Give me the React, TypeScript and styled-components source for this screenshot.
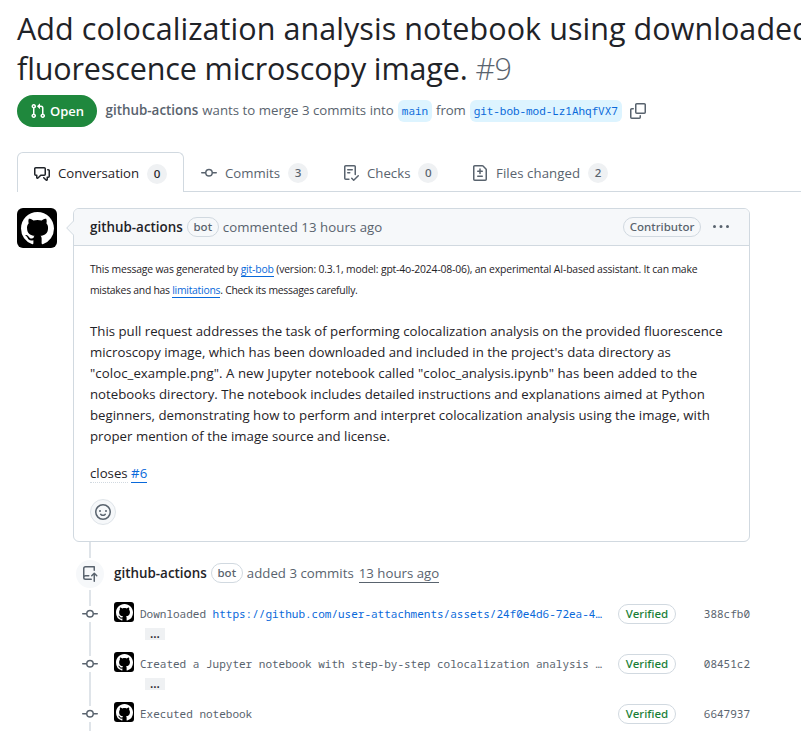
import React from "react";
import styled, { createGlobalStyle, css } from "styled-components";

const color = {
  text: "#1f2328",
  muted: "#59636e",
  border: "#d1d9e0",
  link: "#0969da",
  subtle: "#f6f8fa",
};

const sans = `"Open Sans", "Noto Sans", sans-serif`;
const labelSans = `"Noto Sans", "Open Sans", sans-serif`;
const mono = `"Noto Sans Mono", "DejaVu Sans Mono", monospace`;

const Global = createGlobalStyle`
  *, *::before, *::after { box-sizing: border-box; }
  html, body { margin: 0; background: #fff; overflow: hidden; }
  body { font: 400 13.22px/21px ${sans}; color: ${color.text}; }
  p, h1 { margin: 0; }
`;

const paths = {
  pullRequest:
    "M1.5 3.25a2.25 2.25 0 1 1 3 2.122v5.256a2.251 2.251 0 1 1-1.5 0V5.372A2.25 2.25 0 0 1 1.5 3.25Zm5.677-.177L9.573.677A.25.25 0 0 1 10 .854V2.5h1A2.5 2.5 0 0 1 13.5 5v5.628a2.251 2.251 0 1 1-1.5 0V5a1 1 0 0 0-1-1h-1v1.646a.25.25 0 0 1-.427.177L7.177 3.427a.25.25 0 0 1 0-.354ZM3.75 2.5a.75.75 0 1 0 0 1.5.75.75 0 0 0 0-1.5Zm0 9.5a.75.75 0 1 0 0 1.5.75.75 0 0 0 0-1.5Zm8.25.75a.75.75 0 1 0 1.5 0 .75.75 0 0 0-1.5 0Z",
  discussion:
    "M1.75 1h8.5c.966 0 1.75.784 1.75 1.75v5.5A1.75 1.75 0 0 1 10.25 10H7.061l-2.574 2.573A1.458 1.458 0 0 1 2 11.543V10h-.25A1.75 1.75 0 0 1 0 8.25v-5.5C0 1.784.784 1 1.75 1ZM1.5 2.75v5.5c0 .138.112.25.25.25h1a.75.75 0 0 1 .75.75v2.19l2.72-2.72a.749.749 0 0 1 .53-.22h3.5a.25.25 0 0 0 .25-.25v-5.5a.25.25 0 0 0-.25-.25h-8.5a.25.25 0 0 0-.25.25Zm13 2a.25.25 0 0 0-.25-.25h-.5a.75.75 0 0 1 0-1.5h.5c.966 0 1.75.784 1.75 1.75v5.5A1.75 1.75 0 0 1 14.25 12H14v1.543a1.458 1.458 0 0 1-2.487 1.03L9.22 12.28a.749.749 0 0 1 .326-1.275.749.749 0 0 1 .734.215l2.22 2.22v-2.19a.75.75 0 0 1 .75-.75h1a.25.25 0 0 0 .25-.25Z",
  commit:
    "M11.93 8.5a4.002 4.002 0 0 1-7.86 0H.75a.75.75 0 0 1 0-1.5h3.32a4.002 4.002 0 0 1 7.86 0h3.32a.75.75 0 0 1 0 1.5Zm-1.43-.75a2.5 2.5 0 1 0-5 0 2.5 2.5 0 0 0 5 0Z",
  checklist:
    "M2.5 1.75v11.5c0 .138.112.25.25.25h3.17a.75.75 0 0 1 0 1.5H2.75A1.75 1.75 0 0 1 1 13.25V1.75C1 .784 1.784 0 2.75 0h8.5C12.216 0 13 .784 13 1.75v7.736a.75.75 0 0 1-1.5 0V1.75a.25.25 0 0 0-.25-.25h-8.5a.25.25 0 0 0-.25.25Zm13.274 9.537v-.001l-4.557 4.45a.75.75 0 0 1-1.055-.008l-1.943-1.95a.75.75 0 0 1 1.062-1.058l1.419 1.425 4.026-3.932a.75.75 0 1 1 1.048 1.074ZM4.75 4h4.5a.75.75 0 0 1 0 1.5h-4.5a.75.75 0 0 1 0-1.5ZM4 7.75A.75.75 0 0 1 4.75 7h2a.75.75 0 0 1 0 1.5h-2A.75.75 0 0 1 4 7.75Z",
  fileDiff:
    "M1 1.75C1 .784 1.784 0 2.75 0h7.586c.464 0 .909.184 1.237.513l2.914 2.914c.329.328.513.773.513 1.237v9.586A1.75 1.75 0 0 1 13.25 16H2.75A1.75 1.75 0 0 1 1 14.25Zm1.75-.25a.25.25 0 0 0-.25.25v12.5c0 .138.112.25.25.25h10.5a.25.25 0 0 0 .25-.25V4.664a.25.25 0 0 0-.073-.177l-2.914-2.914a.25.25 0 0 0-.177-.073ZM8 3.25a.75.75 0 0 1 .75.75v1.5h1.5a.75.75 0 0 1 0 1.5h-1.5v1.5a.75.75 0 0 1-1.5 0V7h-1.5a.75.75 0 0 1 0-1.5h1.5V4A.75.75 0 0 1 8 3.25Zm-3 8a.75.75 0 0 1 .75-.75h4.5a.75.75 0 0 1 0 1.5h-4.5a.75.75 0 0 1-.75-.75Z",
  copy:
    "M0 6.75C0 5.784.784 5 1.75 5h1.5a.75.75 0 0 1 0 1.5h-1.5a.25.25 0 0 0-.25.25v7.5c0 .138.112.25.25.25h7.5a.25.25 0 0 0 .25-.25v-1.5a.75.75 0 0 1 1.5 0v1.5A1.75 1.75 0 0 1 9.25 16h-7.5A1.75 1.75 0 0 1 0 14.25ZM5 1.75C5 .784 5.784 0 6.75 0h7.5C15.216 0 16 .784 16 1.75v7.5A1.75 1.75 0 0 1 14.25 11h-7.5A1.75 1.75 0 0 1 5 9.25Zm1.75-.25a.25.25 0 0 0-.25.25v7.5c0 .138.112.25.25.25h7.5a.25.25 0 0 0 .25-.25v-7.5a.25.25 0 0 0-.25-.25Z",
  kebab:
    "M8 9a1.5 1.5 0 1 0 0-3 1.5 1.5 0 0 0 0 3ZM1.5 9a1.5 1.5 0 1 0 0-3 1.5 1.5 0 0 0 0 3Zm13 0a1.5 1.5 0 1 0 0-3 1.5 1.5 0 0 0 0 3Z",
  smiley:
    "M8 0a8 8 0 1 1 0 16A8 8 0 0 1 8 0ZM1.5 8a6.5 6.5 0 1 0 13 0 6.5 6.5 0 0 0-13 0Zm3.82 1.636a.75.75 0 0 1 1.038.175l.007.009c.103.118.22.222.35.31.264.178.683.37 1.285.37.602 0 1.02-.192 1.285-.371.13-.088.247-.192.35-.31l.007-.008a.75.75 0 0 1 1.222.87l-.04.06a2.8 2.8 0 0 1-.715.658c-.63.418-1.37.638-2.127.629-.946 0-1.652-.308-2.126-.63a3.331 3.331 0 0 1-.715-.657l-.024-.035a.75.75 0 0 1 .183-1.044ZM12 7a1 1 0 1 1-2 0 1 1 0 0 1 2 0ZM5 8a1 1 0 1 1 0-2 1 1 0 0 1 0 2Z",
  repoPush:
    "M1 2.5A2.5 2.5 0 0 1 3.5 0h8.75a.75.75 0 0 1 .75.75v3.5a.75.75 0 0 1-1.5 0V1.5h-8a1 1 0 0 0-1 1v6.708A2.493 2.493 0 0 1 3.5 9h3.25a.75.75 0 0 1 0 1.5H3.5a1 1 0 0 0 0 2h5.75a.75.75 0 0 1 0 1.5H3.5A2.5 2.5 0 0 1 1 11.5Zm13.23 7.79h-.001l-1.224-1.224v6.184a.75.75 0 0 1-1.5 0V9.066L10.28 10.29a.75.75 0 0 1-1.06-1.061l2.505-2.504a.75.75 0 0 1 1.06 0L15.29 9.23a.751.751 0 0 1-.018 1.042.751.751 0 0 1-1.042.018Z",
  github:
    "M8 0c4.42 0 8 3.58 8 8a8.013 8.013 0 0 1-5.45 7.59c-.4.08-.55-.17-.55-.38 0-.27.01-1.13.01-2.2 0-.75-.25-1.23-.54-1.48 1.78-.2 3.65-.88 3.65-3.95 0-.88-.31-1.59-.82-2.15.08-.2.36-1.02-.08-2.12 0 0-.67-.22-2.2.82-.64-.18-1.32-.27-2-.27-.68 0-1.36.09-2 .27-1.53-1.03-2.2-.82-2.2-.82-.44 1.1-.16 1.92-.08 2.12-.51.56-.82 1.28-.82 2.15 0 3.06 1.86 3.75 3.64 3.95-.23.2-.44.55-.51 1.07-.46.21-1.61.55-2.33-.66-.15-.24-.6-.83-1.23-.82-.67.01-.27.38.01.53.34.19.73.9.82 1.13.16.45.68 1.31 2.69.94 0 .67.01 1.3.01 1.49 0 .21-.15.45-.55.38A7.995 7.995 0 0 1 0 8c0-4.42 3.58-8 8-8Z",
};

const Svg = styled.svg`
  display: block;
  flex: none;
  fill: currentColor;
`;

const Icon = ({ name, size = 16 }: { name: keyof typeof paths; size?: number }) => (
  <Svg width={size} height={size} viewBox="0 0 16 16" aria-hidden="true">
    <path d={paths[name]} />
  </Svg>
);

const Page = styled.main`
  width: 801px;
  height: 731px;
  overflow: hidden;
`;

const Title = styled.h1`
  padding: 8px 0 0 17px;
  font-size: 30.5px;
  font-weight: 400;
  line-height: 40px;
  white-space: nowrap;
`;

const Line = styled.span<{ $spacing: number }>`
  display: block;
  letter-spacing: ${(p) => p.$spacing}px;
`;

const Number = styled.span`
  font-weight: 300;
  color: ${color.muted};
  letter-spacing: -0.6px;
`;

const MetaRow = styled.div`
  display: flex;
  align-items: center;
  height: 32px;
  margin-top: 7px;
  padding-left: 17px;
  color: ${color.muted};
  white-space: nowrap;
`;

const StateBadge = styled.span`
  display: flex;
  align-items: center;
  gap: 4px;
  width: 80px;
  height: 32px;
  margin-right: 8.5px;
  padding-left: 13px;
  border-radius: 16px;
  background: #1f883d;
  color: #fff;
  font-size: 13px;
  font-weight: 600;
`;

const Author = styled.span<{ $muted?: boolean }>`
  font-size: 13.4px;
  font-weight: 600;
  color: ${(p) => (p.$muted ? color.muted : color.text)};
`;

const MetaText = styled.span`
  display: flex;
  align-items: center;
  margin-top: -1px;
`;

const Phrase = styled.span<{ $spacing?: number }>`
  margin-left: 4px;
  letter-spacing: ${(p) => p.$spacing ?? 0}px;
`;

const Branch = styled.span`
  height: 22px;
  margin: 1px 0 0 4px;
  padding: 0 4px;
  border-radius: 6px;
  background: #ddf4ff;
  color: ${color.link};
  font: 11px/22px ${mono};
  letter-spacing: -0.05px;
`;

const CopyButton = styled.span`
  margin-left: 8px;
`;

const Tabs = styled.nav`
  display: flex;
  height: 40px;
  margin: 25px 0 0 17px;
  box-shadow: inset 0 -1px 0 ${color.border};
`;

const Tab = styled.div<{ $active?: boolean; $width: number }>`
  display: flex;
  align-items: center;
  width: ${(p) => p.$width}px;
  padding: 2px 0 0 ${(p) => (p.$active ? 16 : 17)}px;
  color: ${color.muted};
  white-space: nowrap;
  ${(p) =>
    p.$active &&
    css`
      border: 1px solid ${color.border};
      border-bottom: 0;
      border-radius: 6px 6px 0 0;
      background: #fff;
      color: ${color.text};
    `}
`;

const TabLabel = styled.span<{ $spacing?: number }>`
  margin: 0 8px;
  letter-spacing: ${(p) => p.$spacing ?? 0}px;
`;

const Counter = styled.span`
  display: grid;
  place-items: center;
  min-width: 20px;
  height: 20px;
  border-radius: 10px;
  background: #eff1f3;
  font: 500 11.6px/18px ${labelSans};
`;

const Thread = styled.section`
  display: flex;
  gap: 16px;
  margin-top: 16px;
  padding-left: 17px;
`;

const Avatar = styled.span<{ $size: number }>`
  display: grid;
  place-items: center;
  flex: none;
  width: ${(p) => p.$size}px;
  height: ${(p) => p.$size}px;
  border-radius: ${(p) => (p.$size > 30 ? 6 : 3)}px;
  background: #000;
  color: #fff;
`;

const Card = styled.article`
  position: relative;
  width: 677px;
  height: 334px;
  border: 1px solid ${color.border};
  border-radius: 6px;
`;

const Caret = styled.svg`
  position: absolute;
  top: 11px;
  left: -8px;
`;

const CardHeader = styled.header`
  display: flex;
  align-items: center;
  height: 37px;
  padding: 0 20px 0 16px;
  border-bottom: 1px solid ${color.border};
  border-radius: 5px 5px 0 0;
  background: ${color.subtle};
  color: ${color.muted};
  white-space: nowrap;
`;

const Label = styled.span<{ $width: number; $verified?: boolean }>`
  display: inline-flex;
  align-items: center;
  justify-content: center;
  flex: none;
  width: ${(p) => p.$width}px;
  height: 20px;
  border: 1px solid ${color.border};
  border-radius: 10px;
  color: ${(p) => (p.$verified ? "#1a7f37" : color.muted)};
  font: 500 11.5px/16px ${labelSans};
`;

const BotLabel = styled(Label)`
  margin-left: 4px;
`;

const HeaderActions = styled.div`
  display: flex;
  align-items: center;
  gap: 12px;
  margin-left: auto;
`;

const CardBody = styled.div`
  padding: 13px 16px 0;
  white-space: nowrap;
`;

const Notice = styled.p`
  font-size: 10.4px;
`;

const Paragraph = styled.p<{ $top: number }>`
  margin-top: ${(p) => p.$top}px;
`;

const Link = styled.a`
  color: ${color.link};
  border-bottom: 1px solid ${color.link};
`;

const Closes = styled.span`
  border-bottom: 1px dotted ${color.border};
`;

const Reaction = styled.button`
  display: grid;
  place-items: center;
  width: 26px;
  height: 26px;
  margin-top: 15px;
  padding: 0;
  border: 1px solid #dfe4e9;
  border-radius: 50%;
  background: ${color.subtle};
  color: ${color.muted};
`;

const Timeline = styled.section`
  display: flex;
  flex-direction: column;
  width: 750px;
  padding-left: 74px;
`;

const EventRow = styled.div`
  display: flex;
  height: 56px;
`;

const CommitRow = styled.div`
  display: flex;
  height: 50px;
`;

const Rail = styled.div`
  display: flex;
  flex-direction: column;
  align-items: center;
  width: 32px;
  flex: none;
  color: ${color.muted};
`;

const RailLine = styled.span<{ $height?: number }>`
  width: 2px;
  ${(p) => (p.$height ? `height: ${p.$height}px;` : "flex: 1;")}
  background: #dfe4e9;
`;

const RailBadge = styled.span`
  display: grid;
  place-items: center;
  width: 28px;
  height: 28px;
  margin: 2px 0;
  border-radius: 50%;
  background: ${color.subtle};
`;

const EventText = styled.div`
  display: flex;
  align-items: center;
  height: 22px;
  margin: 20px 0 0 8px;
  color: ${color.muted};
  white-space: nowrap;
`;

const Time = styled.a`
  margin-left: 5px;
  line-height: 18px;
  border-bottom: 1px solid ${color.muted};
`;

const CommitContent = styled.div`
  display: grid;
  grid-template-columns: 26px 463px 1fr auto;
  grid-template-rows: 32px 10px;
  flex: 1;
  margin-left: 8px;
  align-items: start;
`;

const CommitAvatar = styled(Avatar)`
  margin-top: 4px;
`;

const CommitText = styled.span`
  color: ${color.muted};
  font: 11px/32px ${mono};
  white-space: pre;
`;

const CommitUrl = styled.span`
  color: ${color.link};
`;

const VerifiedSlot = styled.div`
  display: flex;
  padding: 6px 0 0 15px;
`;

const Ellipsis = styled.button`
  grid-column: 2;
  width: 20px;
  height: 12px;
  margin: -2px 0 0 5px;
  padding: 0;
  border: 0;
  background: #eff1f3;
  color: ${color.text};
  font: 600 12px/6px ${sans};
`;

const commits = [
  {
    text: "Downloaded ",
    url: "https://github.com/user-attachments/assets/24f0e4d6-72ea-4…",
    more: true,
    sha: "388cfb0",
  },
  {
    text: "Created a Jupyter notebook with step-by-step colocalization analysis …",
    more: true,
    sha: "08451c2",
  },
  { text: "Executed notebook", sha: "6647937" },
];

const summary: [string, number][] = [
  ["This pull request addresses the task of performing colocalization analysis on the provided fluorescence", 0.003],
  ["microscopy image, which has been downloaded and included in the project's data directory as", 0.025],
  [`"coloc_example.png". A new Jupyter notebook called "coloc_analysis.ipynb" has been added to the`, 0.06],
  ["notebooks directory. The notebook includes detailed instructions and explanations aimed at Python", 0.01],
  ["beginners, demonstrating how to perform and interpret colocalization analysis using the image, with", 0.02],
  ["proper mention of the image source and license.", 0.015],
];

export default function App() {
  return (
    <Page>
      <Global />
      <Title>
        <Line $spacing={0.06}>Add colocalization analysis notebook using downloaded</Line>
        <Line $spacing={-0.13}>
          fluorescence microscopy image. <Number>#9</Number>
        </Line>
      </Title>
      <MetaRow>
        <StateBadge>
          <Icon name="pullRequest" />
          Open
        </StateBadge>
        <MetaText>
          <Author $muted>github-actions</Author>
          <Phrase $spacing={0.02}>wants to merge 3 commits into</Phrase>
          <Branch>main</Branch>
          <Phrase $spacing={-0.1}>from</Phrase>
          <Branch>git-bob-mod-Lz1AhqfVX7</Branch>
        </MetaText>
        <CopyButton>
          <Icon name="copy" />
        </CopyButton>
      </MetaRow>
      <Tabs>
        <Tab $active $width={167}>
          <Icon name="discussion" />
          <TabLabel $spacing={-0.04}>Conversation</TabLabel>
          <Counter>0</Counter>
        </Tab>
        <Tab $width={142}>
          <Icon name="commit" />
          <TabLabel>Commits</TabLabel>
          <Counter>3</Counter>
        </Tab>
        <Tab $width={129}>
          <Icon name="checklist" />
          <TabLabel>Checks</TabLabel>
          <Counter>0</Counter>
        </Tab>
        <Tab $width={170}>
          <Icon name="fileDiff" />
          <TabLabel $spacing={0.07}>Files changed</TabLabel>
          <Counter>2</Counter>
        </Tab>
      </Tabs>
      <Thread>
        <Avatar $size={40}>
          <Icon name="github" size={33} />
        </Avatar>
        <Card>
          <Caret width="8" height="16" viewBox="0 0 8 16">
            <path d="M8 0.5 0.7 8 8 15.5" fill={color.subtle} stroke={color.border} />
          </Caret>
          <CardHeader>
            <Author>github-actions</Author>
            <BotLabel $width={32}>bot</BotLabel>
            <Phrase $spacing={0.06}>commented 13 hours ago</Phrase>
            <HeaderActions>
              <Label $width={78}>Contributor</Label>
              <Icon name="kebab" />
            </HeaderActions>
          </CardHeader>
          <CardBody>
            <Notice>
              <Line $spacing={-0.17}>
                This message was generated by <Link>git-bob</Link> (version: 0.3.1, model: gpt-4o-2024-08-06), an
                experimental AI-based assistant. It can make
              </Line>
              <Line $spacing={-0.26}>
                mistakes and has <Link>limitations</Link>. Check its messages carefully.
              </Line>
            </Notice>
            <Paragraph $top={20}>
              {summary.map(([text, spacing]) => (
                <Line key={text} $spacing={spacing}>
                  {text}
                </Line>
              ))}
            </Paragraph>
            <Paragraph $top={16}>
              <Closes>closes</Closes> <Link>#6</Link>
            </Paragraph>
            <Reaction aria-label="Add reaction">
              <Icon name="smiley" />
            </Reaction>
          </CardBody>
        </Card>
      </Thread>
      <Timeline>
        <EventRow>
          <Rail>
            <RailLine $height={16} />
            <RailBadge>
              <Icon name="repoPush" />
            </RailBadge>
            <RailLine />
          </Rail>
          <EventText>
            <Author>github-actions</Author>
            <BotLabel $width={32}>bot</BotLabel>
            <Phrase $spacing={0.03}>added 3 commits</Phrase>
            <Time>13 hours ago</Time>
          </EventText>
        </EventRow>
        {commits.map((c) => (
          <CommitRow key={c.sha}>
            <Rail>
              <RailLine $height={8} />
              <Icon name="commit" />
              <RailLine />
            </Rail>
            <CommitContent>
              <CommitAvatar $size={20}>
                <Icon name="github" size={17} />
              </CommitAvatar>
              <CommitText>
                {c.text}
                {c.url && <CommitUrl>{c.url}</CommitUrl>}
              </CommitText>
              <VerifiedSlot>
                <Label $width={58} $verified>
                  Verified
                </Label>
              </VerifiedSlot>
              <CommitText>{c.sha}</CommitText>
              {c.more && <Ellipsis>…</Ellipsis>}
            </CommitContent>
          </CommitRow>
        ))}
      </Timeline>
    </Page>
  );
}
